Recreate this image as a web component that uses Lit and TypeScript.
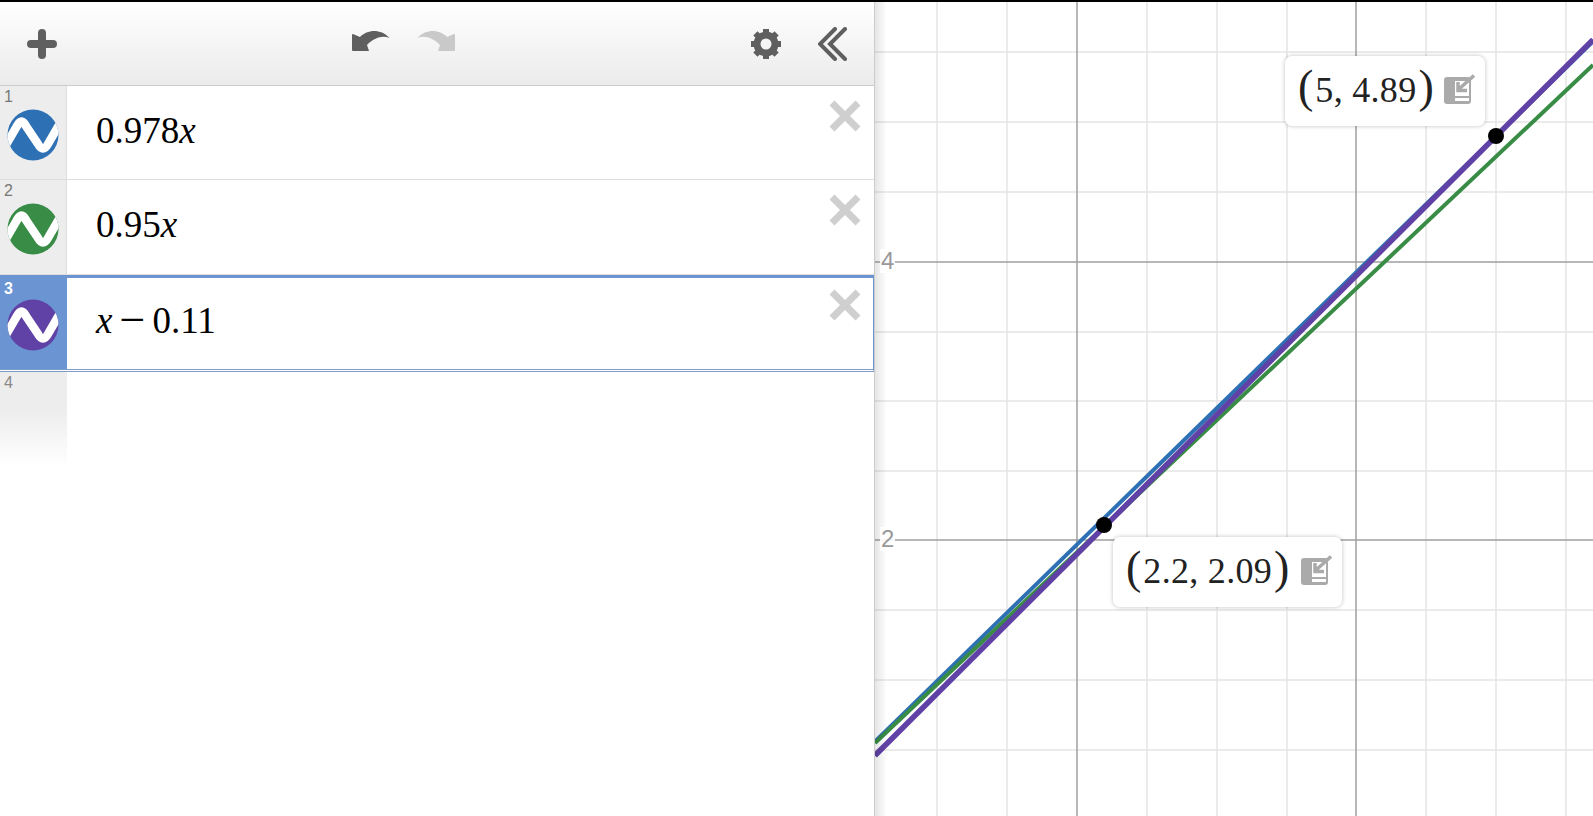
import { LitElement, html, css, svg } from 'lit';
import { customElement } from 'lit/decorators.js';

const WAVE = 'M-4 41 L10 17 Q14.5 8 19 17 L31 35 Q36 44 41 35 L56 9';

const expressions = [
  { n: 1, color: '#2d70b3', math: html`0.978<i>x</i>` },
  { n: 2, color: '#388c46', math: html`0.95<i>x</i>` },
  { n: 3, color: '#6042a6', math: html`<i>x</i><span class="minus">−</span>0.11`, selected: true },
];

// grid positions, read off the graph
const vMinor = [937, 1007, 1147, 1217, 1287, 1426, 1496, 1566];
const vMajor = [1077, 1356];
const hMinor = [52, 122, 192, 332, 401, 471, 610, 680, 750];
const hMajor = [262, 540];

function waveIcon(color: string) {
  return html`<svg class="wave" viewBox="0 0 52 52">
    <clipPath id="c${color.slice(1)}"><circle cx="26" cy="26" r="25.5"></circle></clipPath>
    <circle cx="26" cy="26" r="25.5" fill=${color}></circle>
    <path d=${WAVE} clip-path="url(#c${color.slice(1)})" fill="none" stroke="#fff" stroke-width="8.5"></path>
  </svg>`;
}

function tableIcon() {
  return html`<svg class="table-icon" viewBox="0 0 31 30">
    <rect x="0" y="3" width="27" height="27" rx="3" fill="#aaa"></rect>
    <path d="M11 7H25V22H11Z M11 24H25V27H11Z" fill="#fff"></path>
    <path d="M30 1.5L15 15M14 8V16.5H23" fill="none" stroke="#aaa" stroke-width="3.5"></path>
  </svg>`;
}

function coords(text: string) {
  return html`<span class="coords"><span class="paren">(</span><span class="nums">${text}</span><span class="paren">)</span></span>`;
}

@customElement('app-root')
export class AppRoot extends LitElement {
  static styles = css`
    :host {
      display: block;
      height: 816px;
      overflow: hidden;
      font-family: "Liberation Sans", Arial, sans-serif;
      background: #fff;
    }
    .app {
      display: flex;
      flex-direction: column;
      height: 816px;
      border-top: 2px solid #000;
      box-sizing: border-box;
    }
    .main {
      display: flex;
      flex: 1;
      min-height: 0;
    }
    .list {
      width: 875px;
      flex: none;
      display: flex;
      flex-direction: column;
      border-right: 1px solid #ccc;
      box-sizing: border-box;
    }
    .header {
      height: 84px;
      flex: none;
      display: grid;
      grid-template-columns: 1fr auto 1fr;
      align-items: center;
      padding: 0 26px;
      box-sizing: border-box;
      border-bottom: 1px solid #ccc;
      background: linear-gradient(#fff, #ebebeb);
    }
    .header svg { display: block; }
    .left { display: flex; }
    .center { display: flex; gap: 27px; margin: 0 67px 6px 0; }
    .right { display: flex; justify-content: flex-end; align-items: center; gap: 36px; }
    .row {
      height: 94px;
      display: flex;
      box-sizing: border-box;
      border-bottom: 1px solid #ddd;
      position: relative;
    }
    .row.second { height: 95px; }
    .gutter {
      width: 67px;
      flex: none;
      box-sizing: border-box;
      background: #ededed;
      border-right: 1px solid #ddd;
      position: relative;
    }
    .num {
      position: absolute;
      left: 4px;
      top: 3px;
      font-size: 16px;
      line-height: 16px;
      color: #777;
    }
    .wave {
      position: absolute;
      left: 7px;
      top: 23px;
      width: 52px;
      height: 52px;
    }
    .math {
      padding: 20px 0 0 29px;
      font-family: "Liberation Serif", "Times New Roman", serif;
      font-size: 37px;
      line-height: 50px;
      color: #000;
      flex: 1;
    }
    .minus { font-size: 46px; line-height: 0; vertical-align: -2px; margin: 0 7px; }
    .close {
      position: absolute;
      right: 13px;
      top: 14px;
      width: 32px;
      height: 32px;
    }
    .row.selected {
      height: 97px;
      border-top: 3px solid #6b94d2;
      border-bottom: 3px double #7e9cc9;
      border-right: 1px solid #6b94d2;
    }
    .row.selected .gutter { background: #6b94d2; border-right: none; }
    .row.selected .num { color: #fff; font-weight: bold; }
    .row.selected .wave { top: 21px; }
    .row.selected .math { padding-top: 18px; }
    .row.selected .close { right: 12px; top: 11px; }
    .row.empty {
      height: 95px;
      border-bottom: none;
    }
    .row.empty .gutter {
      background: linear-gradient(#ededed 0, #ededed 40%, #fff 100%);
      border-right: none;
    }
    .row.empty .num { color: #888; }
    .graph {
      flex: 1;
      position: relative;
      overflow: hidden;
    }
    .graph > svg {
      position: absolute;
      left: 0;
      top: 0;
    }
    .shade {
      position: absolute;
      left: 0;
      top: 0;
      bottom: 0;
      width: 12px;
      background: linear-gradient(to right, rgba(0, 0, 0, 0.1), rgba(0, 0, 0, 0));
    }
    .axis-num {
      position: absolute;
      left: 5px;
      font-size: 24px;
      line-height: 24px;
      color: #999;
      background: rgba(255, 255, 255, 0.9);
      padding: 0 1px;
    }
    .tip {
      position: absolute;
      height: 70px;
      box-sizing: border-box;
      display: flex;
      align-items: center;
      justify-content: space-between;
      padding: 0 10px 0 13px;
      background: #fff;
      border-radius: 7px;
      box-shadow: 0 0 4px rgba(0, 0, 0, 0.25);
      font-family: "Liberation Serif", "Times New Roman", serif;
      font-size: 36px;
      color: #222;
    }
    .coords { display: flex; align-items: center; }
    .nums { line-height: 40px; margin: 0 2px 0 2px; padding-bottom: 2px; letter-spacing: 0.3px; }
    .paren { font-size: 46px; line-height: 46px; padding-bottom: 8px; }
    .table-icon { width: 31px; height: 30px; flex: none; margin-bottom: 4px; }
  `;

  render() {
    return html`<div class="app"><div class="main">
      <div class="list">
        <div class="header">
          <div class="left">
            <svg width="32" height="32" viewBox="0 0 32 32">
              <path d="M16 5V27M5 16H27" stroke="#5f5f5f" stroke-width="8" stroke-linecap="round"></path>
            </svg>
          </div>
          <div class="center">
            <svg width="38" height="22" viewBox="0 0 38 22"><path d="M1 4L8 7C15 0 28 -2 37.5 8C30 5 22 8 15 15L17 21H1Q0 21 0 20V5Q0 4 1 4Z" fill="#5f5f5f"></path></svg>
            <svg width="38" height="22" viewBox="0 0 38 22"><path d="M37 4L30 7C23 0 10 -2 .5 8C8 5 16 8 23 15L21 21H37Q38 21 38 20V5Q38 4 37 4Z" fill="#c9c9c9"></path></svg>
          </div>
          <div class="right">
            <svg width="32" height="32" viewBox="0 0 32 32">
              <circle cx="16" cy="16" r="8.5" fill="none" stroke="#5f5f5f" stroke-width="8"></circle>
              <path d="M16 1V31M1 16H31M5.4 5.4L26.6 26.6M26.6 5.4L5.4 26.6" stroke="#5f5f5f" stroke-width="6"></path>
              <circle cx="16" cy="16" r="5.5" fill="#f4f4f4"></circle>
            </svg>
            <svg width="30" height="34" viewBox="0 0 30 34">
              <path d="M17 2L2 17L17 32M27 2L12 17L27 32" fill="none" stroke="#5f5f5f" stroke-width="4" stroke-linecap="round"></path>
            </svg>
          </div>
        </div>
        ${expressions.map(e => html`
          <div class="row ${e.selected ? 'selected' : ''} ${e.n === 2 ? 'second' : ''}">
            <div class="gutter"><span class="num">${e.n}</span>${waveIcon(e.color)}</div>
            <div class="math">${e.math}</div>
            <svg class="close" viewBox="0 0 32 32">
              <path d="M3 3L29 29M29 3L3 29" stroke="#cfcfcf" stroke-width="7"></path>
            </svg>
          </div>`)}
        <div class="row empty"><div class="gutter"><span class="num">4</span></div></div>
      </div>
      <div class="graph">
        <svg width="718" height="814" viewBox="875 2 718 814">
          ${vMinor.map(x => svg`<line x1=${x} x2=${x} y1="0" y2="816" stroke="#e4e4e4" stroke-width="1.5"></line>`)}
          ${hMinor.map(y => svg`<line x1="875" x2="1593" y1=${y} y2=${y} stroke="#e4e4e4" stroke-width="1.5"></line>`)}
          ${vMajor.map(x => svg`<line x1=${x} x2=${x} y1="0" y2="816" stroke="#9f9f9f" stroke-width="1.5"></line>`)}
          ${hMajor.map(y => svg`<line x1="875" x2="1593" y1=${y} y2=${y} stroke="#9f9f9f" stroke-width="1.5"></line>`)}
          <line x1="875" y1="741.5" x2="1593" y2="41.4" stroke="#2d70b3" stroke-width="4"></line>
          <line x1="875" y1="743" x2="1593" y2="65" stroke="#388c46" stroke-width="4"></line>
          <line x1="875" y1="755.5" x2="1593" y2="39.6" stroke="#6042a6" stroke-width="5.5"></line>
          <circle cx="1104" cy="525" r="8" fill="#000"></circle>
          <circle cx="1496" cy="136" r="8" fill="#000"></circle>
        </svg>
        <div class="shade"></div>
        <span class="axis-num" style="top:247px">4</span>
        <span class="axis-num" style="top:525px">2</span>
        <div class="tip" style="left:410px;top:54px;width:200px">${coords('5, 4.89')}${tableIcon()}</div>
        <div class="tip" style="left:238px;top:535px;width:229px">${coords('2.2, 2.09')}${tableIcon()}</div>
      </div>
    </div></div>`;
  }
}
